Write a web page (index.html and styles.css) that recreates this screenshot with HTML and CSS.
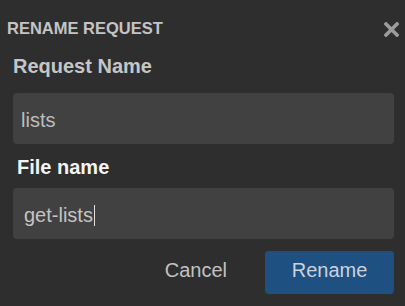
FILE: index.html
```html
<!DOCTYPE html>
<html>
<head>
<meta charset="utf-8">
<link rel="stylesheet" href="styles.css">
</head>
<body>
<div class="dialog">
  <div class="header">
    <span class="title">RENAME REQUEST</span>
    <svg class="close" width="15" height="15" viewBox="0 0 15 15"><path d="M2 2 L13 13 M13 2 L2 13" stroke="#9c9c9c" stroke-width="3.6" stroke-linecap="square"/></svg>
  </div>
  <div class="label label-request">Request Name</div>
  <div class="field field-request">lists</div>
  <div class="label label-file">File name</div>
  <div class="field field-file">get-lists<span class="caret"></span></div>
  <div class="actions">
    <button class="btn btn-cancel">Cancel</button>
    <button class="btn btn-primary">Rename</button>
  </div>
</div>
</body>
</html>
```
FILE: styles.css
```css
html, body {
  margin: 0;
  padding: 0;
  background: #2e2e2e;
  font-family: "Liberation Sans", Arial, sans-serif;
}
.dialog {
  padding: 18px 11px 0 13px;
}
.header {
  display: flex;
  justify-content: space-between;
  align-items: center;
  height: 20px;
  margin-left: -6px;
  margin-right: -5px;
}
.title {
  font-size: 16.5px;
  line-height: 20px;
  font-weight: bold;
  color: #c4c4c4;
}
.close {
  display: block;
  margin-top: 2px;
}
.label {
  font-size: 20px;
  line-height: 24px;
  font-weight: bold;
}
.label-request {
  margin-top: 16px;
  color: #c6c6c6;
}
.label-file {
  margin-top: 11px;
  padding-left: 4px;
  color: #f4f4f4;
}
.field {
  box-sizing: border-box;
  height: 51px;
  background: #414141;
  border-radius: 4px;
  font-size: 20px;
  line-height: 24px;
  color: #bdbdbd;
  display: flex;
  align-items: center;
}
.field-request {
  margin-top: 15px;
  padding: 2px 0 0 8px;
}
.field-file {
  margin-top: 9px;
  padding: 3px 0 0 11px;
  color: #c4c4c4;
}
.caret {
  display: inline-block;
  width: 1px;
  height: 21px;
  background: #e0e0e0;
  margin-left: 1px;
  margin-top: 1px;
}
.actions {
  margin-top: 12px;
  display: flex;
  justify-content: flex-end;
  align-items: stretch;
}
.btn {
  border: none;
  font-family: "Liberation Sans", Arial, sans-serif;
  font-size: 20px;
  line-height: 24px;
  height: 43px;
  padding: 0 0 6px 0;
  border-radius: 4px;
  cursor: pointer;
}
.btn-cancel {
  background: transparent;
  color: #c2c2c2;
  padding-left: 18px;
  padding-right: 38px;
}
.btn-primary {
  width: 129px;
  background: #1e5081;
  color: #c9d3de;
}
```
